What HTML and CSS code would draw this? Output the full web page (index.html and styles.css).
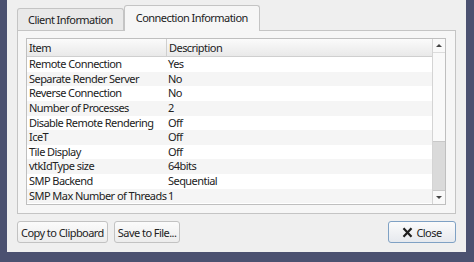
FILE: index.html
```html
<!DOCTYPE html>
<html lang="en">
<head>
  <meta charset="UTF-8">
  <title>Connection Information</title>
  <link rel="stylesheet" href="styles.css">
</head>
<body>
  <div class="dialog">
    <!-- Tab bar -->
    <div class="tabs">
      <div class="tab">Client Information</div>
      <div class="tab active">Connection Information</div>
    </div>

    <div class="pane">
      <div class="table">
        <div class="list">
          <div class="header">
            <div class="col-item">Item</div>
            <div class="col-desc">Description</div>
          </div>
          <div class="row"><div class="col-item">Remote Connection</div><div class="col-desc">Yes</div></div>
          <div class="row alt"><div class="col-item">Separate Render Server</div><div class="col-desc">No</div></div>
          <div class="row"><div class="col-item">Reverse Connection</div><div class="col-desc">No</div></div>
          <div class="row alt"><div class="col-item">Number of Processes</div><div class="col-desc">2</div></div>
          <div class="row"><div class="col-item">Disable Remote Rendering</div><div class="col-desc">Off</div></div>
          <div class="row alt"><div class="col-item">IceT</div><div class="col-desc">Off</div></div>
          <div class="row"><div class="col-item">Tile Display</div><div class="col-desc">Off</div></div>
          <div class="row alt"><div class="col-item">vtkIdType size</div><div class="col-desc">64bits</div></div>
          <div class="row"><div class="col-item">SMP Backend</div><div class="col-desc">Sequential</div></div>
          <div class="row alt"><div class="col-item">SMP Max Number of Threads</div><div class="col-desc">1</div></div>
        </div>
        <div class="scrollbar">
          <div class="arrow up"></div>
          <div class="track"><div class="handle"></div></div>
          <div class="arrow down"></div>
        </div>
      </div>
    </div>

    <!-- Buttons -->
    <div class="buttons">
      <button class="button">Copy to Clipboard</button>
      <button class="button">Save to File...</button>
      <button class="button default">
        <svg width="11" height="11" viewBox="0 0 11 11"><path d="M1.5 1.2 L9.5 9.8 M9.5 1.2 L1.5 9.8" stroke="#1e1e1e" stroke-width="2.2" fill="none"/></svg>
        Close
      </button>
    </div>
  </div>
</body>
</html>
```
FILE: styles.css
```css
/* Dialog look, Qt Fusion style */
body {
  margin: 0;
  background-color: #4b5170;
  font-family: "Noto Sans", "Open Sans", sans-serif;
  font-size: 11px;
  letter-spacing: -0.55px;
  color: #222;
}
.dialog {
  width: 459px;
  height: 252px;
  margin-left: 7px;
  background: #efefef;
  padding: 5px 10px 0 10px;
  box-sizing: border-box;
}
.tabs {
  display: flex;
  align-items: flex-end;
  height: 25px;
}
.tab {
  height: 22px;
  line-height: 21px;
  padding: 0 10px;
  border: 1px solid #c4c4c4;
  border-bottom: none;
  border-radius: 3px 3px 0 0;
  background: #e9e9e9;
  box-sizing: border-box;
}
.tab.active {
  height: 26px;
  line-height: 23px;
  margin-bottom: -1px;
  padding: 0 11px;
  background: #f6f6f6;
  position: relative;
}
.pane {
  height: 184px;
  border: 1px solid #c4c4c4;
  background: #f6f6f6;
  padding: 7px 9px 8px 8px;
  box-sizing: border-box;
}
.table {
  display: flex;
  height: 167px;
  border: 1px solid #bfbfbf;
  background: #fff;
  box-sizing: border-box;
}
.list {
  flex: 1;
  overflow: hidden;
}
.header {
  display: flex;
  height: 18px;
  line-height: 17px;
  background: linear-gradient(#fbfbfb, #e9e9e9);
  border-bottom: 1px solid #cfcfcf;
  box-sizing: border-box;
}
.header .col-item {
  border-right: 1px solid #cfcfcf;
}
.row {
  display: flex;
  height: 14.65px;
  line-height: 14px;
}
.row.alt {
  background: #f5f5f5;
}
.col-item {
  width: 137px;
  padding-left: 2px;
  white-space: nowrap;
}
.col-desc {
  padding-left: 2px;
  white-space: nowrap;
}
.scrollbar {
  width: 12px;
  display: flex;
  flex-direction: column;
  border-left: 1px solid #d4d4d4;
  background: #f9f9f9;
}
.arrow {
  height: 13px;
  position: relative;
}
.arrow.up::after,
.arrow.down::after {
  content: "";
  position: absolute;
  left: 3px;
  border-left: 3px solid transparent;
  border-right: 3px solid transparent;
}
.arrow.up {
  border-bottom: 1px solid #dcdcdc;
}
.arrow.up::after {
  top: 5px;
  border-bottom: 3px solid #444;
}
.arrow.down::after {
  top: 5px;
  border-top: 3px solid #444;
}
.track {
  flex: 1;
  display: flex;
  flex-direction: column;
  justify-content: flex-end;
}
.handle {
  height: 48px;
  background: #dadada;
  border-top: 1px solid #c8c8c8;
  border-bottom: 1px solid #c8c8c8;
}
.buttons {
  display: flex;
  gap: 6px;
  margin-top: 7px;
}
.button {
  height: 22px;
  padding: 0 3px;
  font-family: inherit;
  font-size: 11px;
  letter-spacing: -0.55px;
  color: #222;
  background: linear-gradient(#fbfbfb, #ececec);
  border: 1px solid #c2c2c2;
  border-radius: 3px;
  display: flex;
  align-items: center;
  gap: 3px;
}
.button.default {
  margin-left: auto;
  width: 68px;
  justify-content: center;
  border-color: #7fa1c4;
  background: linear-gradient(#fbfbfb, #e6e9ee);
}
```
